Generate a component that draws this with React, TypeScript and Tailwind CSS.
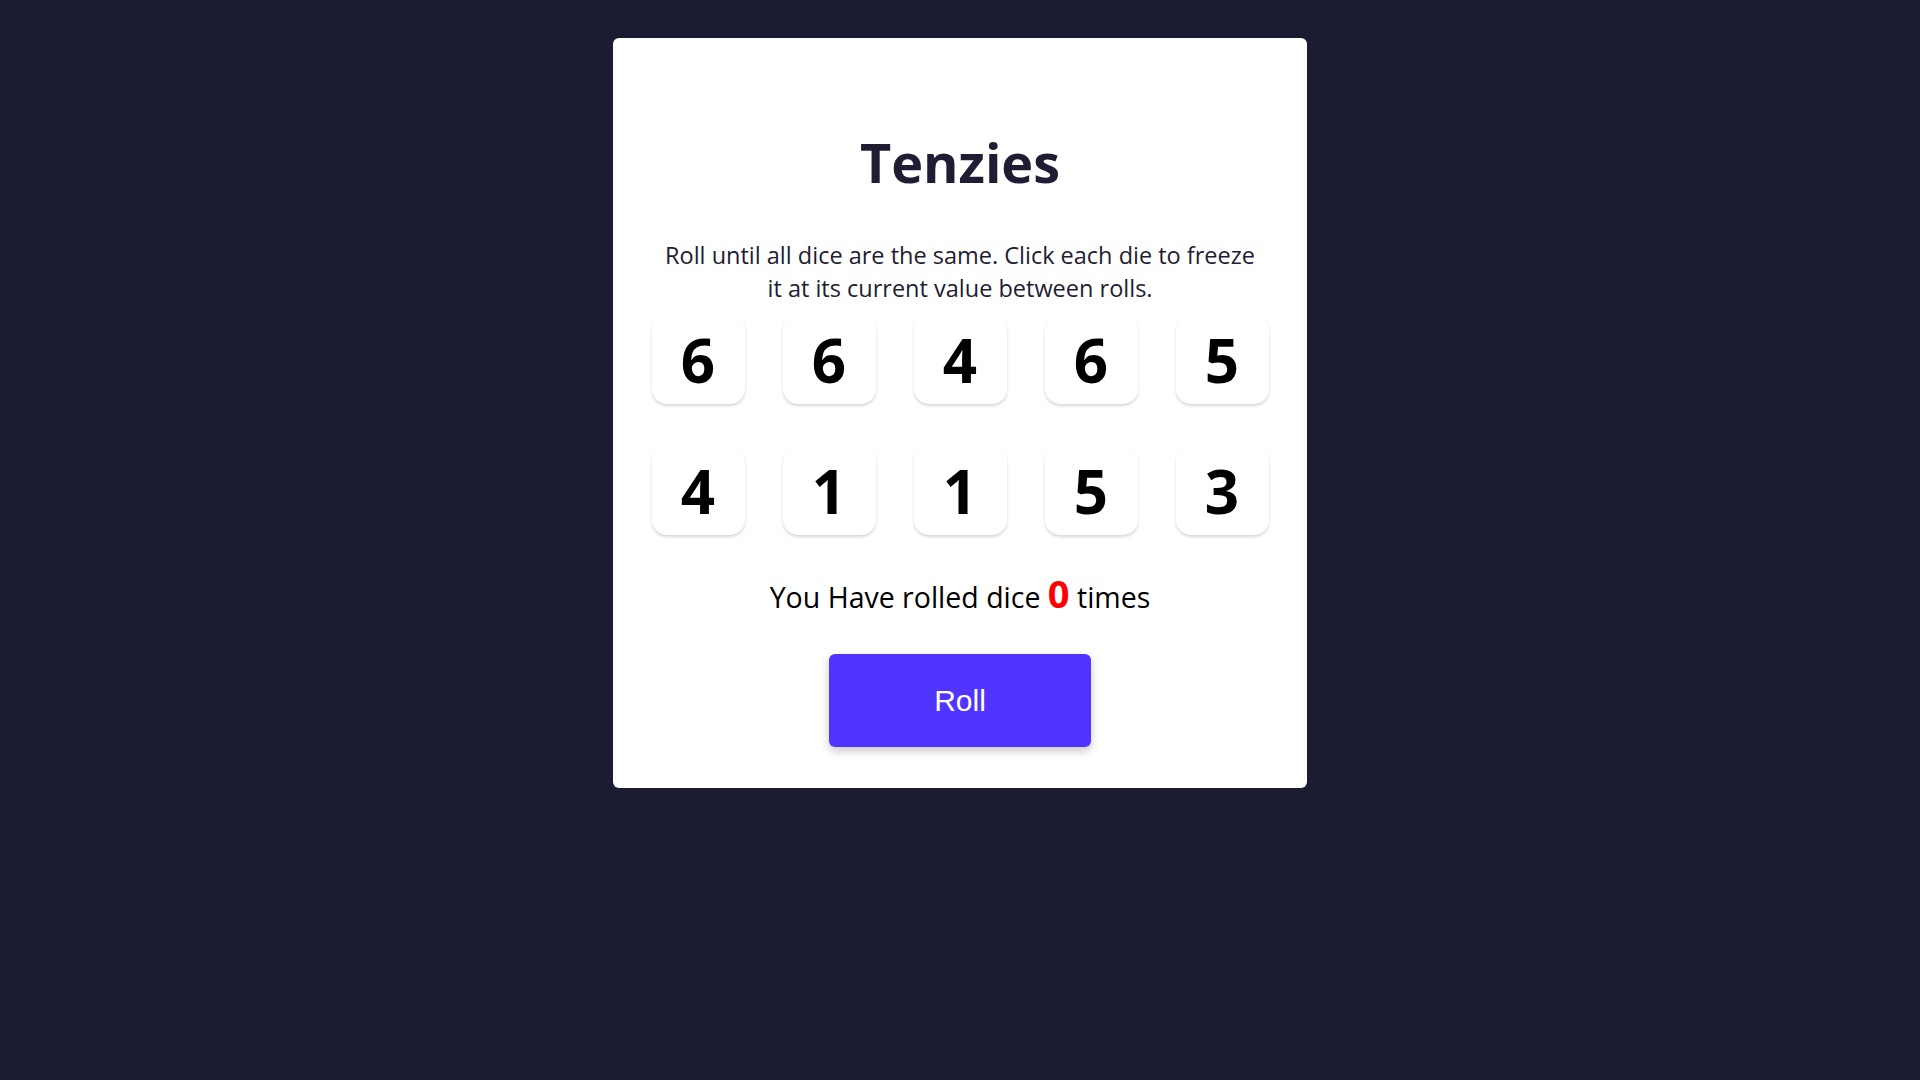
import { useState } from 'react';

type Die = { id: number; value: number; held: boolean };

const START_VALUES = [6, 6, 4, 6, 5, 4, 1, 1, 5, 3];

function makeDice(): Die[] {
  return START_VALUES.map((value, id) => ({ id, value, held: false }));
}

function DieButton({ die, onHold }: { die: Die; onHold: () => void }) {
  return (
    <button
      onClick={onHold}
      className={`w-[93px] h-[89px] rounded-[15px] flex items-center justify-center shadow-[0_2px_3px_rgba(0,0,0,0.16)] text-[60px] font-bold text-black leading-none ${
        die.held ? 'bg-[#59e391]' : 'bg-white'
      }`}
    >
      {die.value}
    </button>
  );
}

export default function App() {
  const [dice, setDice] = useState<Die[]>(makeDice);
  const [rolls, setRolls] = useState(0);

  const hold = (id: number) => {
    setDice((prev) => prev.map((d) => (d.id === id ? { ...d, held: !d.held } : d)));
  };

  const roll = () => {
    setDice((prev) =>
      prev.map((d) => (d.held ? d : { ...d, value: Math.ceil(Math.random() * 6) }))
    );
    setRolls((n) => n + 1);
  };

  return (
    <div className="min-h-screen bg-[#1b1c31] pt-[38px] font-['Open_Sans',sans-serif]">
      <main className="w-[694px] mx-auto bg-white rounded-[6px] flex flex-col items-center pt-[92px] pb-[41px]">
        <h1 className="text-[54px] leading-[65px] font-bold text-[#1e1d33]">Tenzies</h1>

        <p className="mt-[44px] max-w-[602px] text-center text-[23.5px] leading-[33px] text-[#1e1d33]">
          Roll until all dice are the same. Click each die to freeze it at its current value between rolls.
        </p>

        {/* Dice grid */}
        <div className="mt-[10px] grid grid-cols-5 gap-x-[38px] gap-y-[42px]">
          {dice.map((die) => (
            <DieButton key={die.id} die={die} onHold={() => hold(die.id)} />
          ))}
        </div>

        <p className="mt-[39px] text-[28.5px] leading-[40px] text-black">
          You Have rolled dice{' '}
          <span className="text-[38px] leading-none font-bold text-[#ff0000]">{rolls}</span>{' '}
          times
        </p>

        <button
          onClick={roll}
          className="mt-[37px] w-[262px] h-[93px] rounded-[6px] bg-[#5035ff] text-white text-[30px] font-['Liberation_Sans',Arial,sans-serif] shadow-[0_4px_10px_rgba(0,0,0,0.22)]"
        >
          Roll
        </button>
      </main>
    </div>
  );
}
